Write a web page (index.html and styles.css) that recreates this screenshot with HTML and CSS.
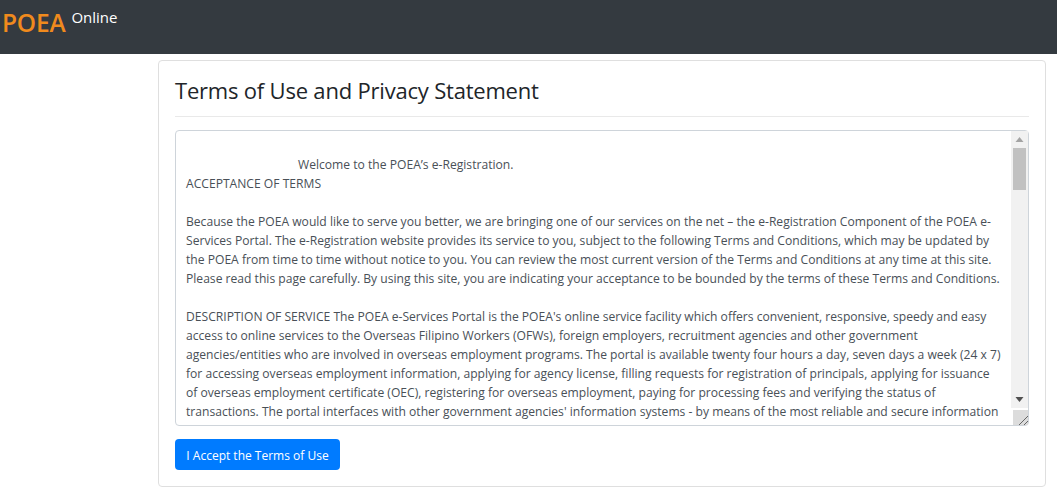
FILE: index.html
```html
<!DOCTYPE html>
<html lang="en">
<head>
  <meta charset="UTF-8" />
  <meta name="viewport" content="width=device-width, initial-scale=1.0" />
  <title>POEA Online</title>
  <link rel="stylesheet" href="styles.css">
</head>
<body>
  <header class="topbar">
    <a class="brand" href="#">POEA</a>
    <span class="brand-sub">Online</span>
  </header>

  <main class="page">
    <section class="card">
      <h1 class="card-title">Terms of Use and Privacy Statement</h1>
      <hr class="rule">
      <div class="terms-wrap">
        <div class="terms-box">
          <p class="terms-welcome">Welcome to the POEA’s e-Registration.</p>
          <p>ACCEPTANCE OF TERMS</p>
          <p class="terms-gap">Because the POEA would like to serve you better, we are bringing one of our services on the net – the e-Registration Component of the POEA e-<br>
          Services Portal. The e-Registration website provides its service to you, subject to the following Terms and Conditions, which may be updated by<br>
          the POEA from time to time without notice to you. You can review the most current version of the Terms and Conditions at any time at this site.<br>
          Please read this page carefully. By using this site, you are indicating your acceptance to be bounded by the terms of these Terms and Conditions.</p>
          <p class="terms-gap">DESCRIPTION OF SERVICE The POEA e-Services Portal is the POEA's online service facility which offers convenient, responsive, speedy and easy<br>
          access to online services to the Overseas Filipino Workers (OFWs), foreign employers, recruitment agencies and other government<br>
          agencies/entities who are involved in overseas employment programs. The portal is available twenty four hours a day, seven days a week (24 x 7)<br>
          for accessing overseas employment information, applying for agency license, filling requests for registration of principals, applying for issuance<br>
          of overseas employment certificate (OEC), registering for overseas employment, paying for processing fees and verifying the status of<br>
          transactions. The portal interfaces with other government agencies' information systems - by means of the most reliable and secure information</p>
        </div>
        <div class="scrollbar">
          <svg class="scroll-arrow" width="17" height="17" viewBox="0 0 17 17"><path d="M8.5 6l4 5h-8z" fill="#a3a3a3"/></svg>
          <div class="scroll-thumb"></div>
          <div class="scroll-track"></div>
          <svg class="scroll-arrow" width="17" height="17" viewBox="0 0 17 17"><path d="M4.5 6h8l-4 5z" fill="#505050"/></svg>
        </div>
      </div>
      <button class="btn-accept">I Accept the Terms of Use</button>
    </section>
  </main>
</body>
</html>
```

FILE: styles.css
```css
* {
  box-sizing: border-box;
}
body {
  margin: 0;
  background-color: #fff;
  font-family: "Open Sans", "Noto Sans", Arial, sans-serif;
  color: #495057;
}
.topbar {
  height: 54px;
  background-color: #343a40;
  display: flex;
  align-items: flex-start;
  padding-left: 2px;
}
.brand {
  color: #f08a1d;
  font-size: 24.5px;
  font-weight: 600;
  line-height: 30px;
  margin-top: 8px;
  letter-spacing: -0.2px;
  text-decoration: none;
}
.brand-sub {
  color: #fff;
  font-size: 15px;
  line-height: 20px;
  margin: 7px 0 0 6px;
}
.page {
  padding: 6px 11px 0 158px;
}
.card {
  height: 427px;
  border: 1px solid #dfdfdf;
  border-radius: 4px;
  padding: 14px 16px 15px;
}
.card-title {
  margin: 0;
  font-size: 22px;
  line-height: 30px;
  font-weight: 500;
  letter-spacing: -0.2px;
  color: #212529;
}
.rule {
  margin: 11px 0 13px;
  border: 0;
  border-top: 1px solid #e9e9e9;
}
.terms-wrap {
  position: relative;
}
.terms-box {
  height: 296px;
  border: 1px solid #ced4da;
  border-radius: 4px;
  padding: 24px 10px 0;
  font-size: 12.12px;
  line-height: 19px;
  overflow: hidden;
  resize: vertical;
  white-space: nowrap;
}
.terms-box p {
  margin: 0;
}
.terms-box .terms-welcome {
  padding-left: 112px;
}
.terms-box .terms-gap {
  margin-top: 19px;
}
.terms-box::-webkit-resizer {
  background-color: #dcdcdc;
  background-image: url("data:image/svg+xml,%3Csvg xmlns='http://www.w3.org/2000/svg' width='17' height='17'%3E%3Cpath d='M15 6L6 15M15 11l-4 4' stroke='%23666' fill='none'/%3E%3C/svg%3E");
}
.scrollbar {
  position: absolute;
  top: 1px;
  right: 1px;
  bottom: 18px;
  width: 17px;
  display: flex;
  flex-direction: column;
  background-color: #f1f1f1;
}
.scroll-arrow {
  flex: none;
  display: block;
}
.scroll-thumb {
  flex: none;
  height: 42px;
  margin: 0 2px;
  background-color: #c1c1c1;
}
.scroll-track {
  flex: 1;
}
.btn-accept {
  display: block;
  margin-top: 13px;
  width: 165px;
  height: 31px;
  padding: 1px 0 0;
  border: 0;
  border-radius: 4px;
  background-color: #007bff;
  color: #fff;
  font-family: inherit;
  font-size: 12px;
}
```
